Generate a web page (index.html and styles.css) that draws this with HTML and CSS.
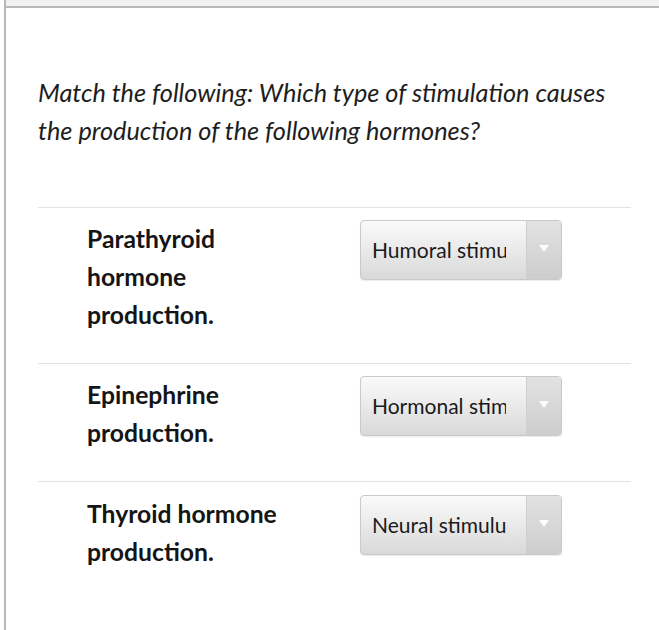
FILE: index.html
```html
<!DOCTYPE html>
<html lang="en">

<head>
    <meta charset="UTF-8">
    <meta name="viewport" content="width=device-width, initial-scale=1.0">
    <title>Matching Question</title>
    <link rel="stylesheet" href="styles.css">
</head>

<body>
    <div class="topbar"></div>
    <div class="question-frame">
        <p class="question-text">Match the following: Which type of stimulation causes the production of the following hormones?</p>

        <div class="match-list">
            <div class="match-row">
                <div class="match-label">Parathyroid hormone production.</div>
                <div class="dropdown">
                    <span class="dropdown-value">Humoral stimulus</span>
                    <span class="dropdown-arrow"></span>
                </div>
            </div>
            <div class="match-row">
                <div class="match-label">Epinephrine production.</div>
                <div class="dropdown">
                    <span class="dropdown-value">Hormonal stimulus</span>
                    <span class="dropdown-arrow"></span>
                </div>
            </div>
            <div class="match-row">
                <div class="match-label">Thyroid hormone production.</div>
                <div class="dropdown">
                    <span class="dropdown-value">Neural stimulus</span>
                    <span class="dropdown-arrow"></span>
                </div>
            </div>
        </div>
    </div>
</body>

</html>
```

FILE: styles.css
```css
body,
html {
    margin: 0;
    padding: 0;
    height: 100%;
    background: #fff;
    font-family: Lato, "Open Sans", sans-serif;
    color: #1c1c1c;
    overflow: hidden;
}

.topbar {
    height: 6px;
    background: #f1f1f1;
    border-bottom: 2px solid #b8b8b8;
    margin-left: 4px;
    border-left: 2px solid #b8b8b8;
}

.question-frame {
    margin-left: 4px;
    border-left: 2px solid #b8b8b8;
    height: calc(100% - 8px);
    padding-left: 32px;
    box-sizing: border-box;
    padding-top: 65px;
}

.question-text {
    margin: 0;
    width: 590px;
    font-size: 25.3px;
    font-style: italic;
    line-height: 38px;
    color: #1e1e1e;
}

.match-list {
    margin-top: 58px;
    width: 593px;
}

.match-row {
    display: flex;
    align-items: flex-start;
    border-top: 1px solid #e2e2e2;
    padding: 12px 0 29px 49px;
}

.match-row:last-child {
    padding-top: 13px;
}

.match-label {
    width: 200px;
    margin-right: 73px;
    font-size: 24.7px;
    font-weight: bold;
    line-height: 38px;
    color: #151515;
}

.dropdown {
    display: flex;
    width: 200px;
    height: 58px;
    border: 1px solid #c9c9c9;
    border-radius: 4px;
    background: linear-gradient(#fafafa, #d9d9d9);
    box-shadow: 0 1px 1px rgba(0, 0, 0, 0.08);
    overflow: hidden;
}

.dropdown-value {
    width: 134px;
    margin-left: 11px;
    margin-right: 20px;
    overflow: hidden;
    white-space: nowrap;
    font-size: 21px;
    line-height: 58px;
    color: #1a1a1a;
}

.dropdown-arrow {
    position: relative;
    flex: 1;
    border-left: 1px solid #cfcfcf;
    background: linear-gradient(#e2e2e2, #cdcdcd);
}

/* small white caret */
.dropdown-arrow::after {
    content: "";
    position: absolute;
    left: 50%;
    top: 24px;
    margin-left: -5px;
    border-left: 5px solid transparent;
    border-right: 5px solid transparent;
    border-top: 7px solid #fcfcfc;
}
```
